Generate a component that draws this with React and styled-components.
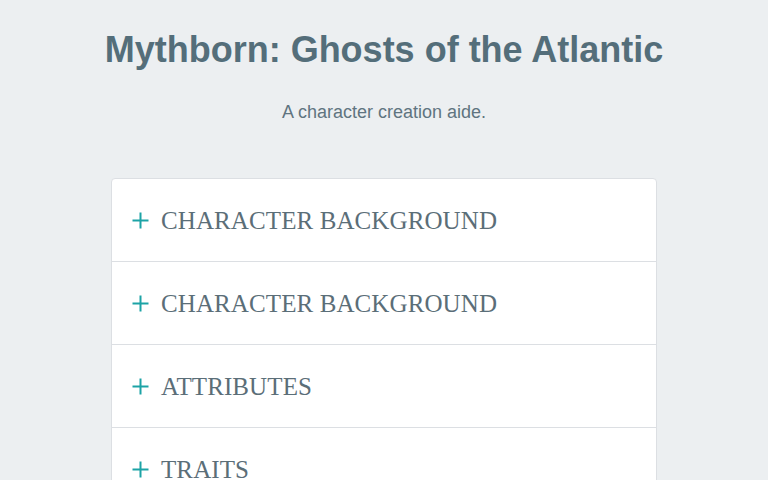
import React from "react";
import styled, { createGlobalStyle } from "styled-components";

const GlobalStyle = createGlobalStyle`
  html, body {
    margin: 0;
    padding: 0;
    background: #eceff1;
  }
  body {
    font-family: "Liberation Sans", Arial, sans-serif;
  }
`;

const sections = [
	"CHARACTER BACKGROUND",
	"CHARACTER BACKGROUND",
	"ATTRIBUTES",
	"TRAITS",
	"SKILLS",
];

const PlusIcon = () => (
	<svg width="17" height="17" viewBox="0 0 17 17" aria-hidden="true">
		<path d="M8.5 0.5v16M0.5 8.5h16" stroke="#1ca3a6" strokeWidth="2" fill="none" />
	</svg>
);

const App = () => {
	return (
		<>
			<GlobalStyle />
			<Page>
				<Title>Mythborn: Ghosts of the Atlantic</Title>
				<Subtitle>A character creation aide.</Subtitle>
				<Accordion>
					{sections.map((label, i) => (
						<Row key={i}>
							<IconWrap>
								<PlusIcon />
							</IconWrap>
							<RowLabel>{label}</RowLabel>
						</Row>
					))}
				</Accordion>
			</Page>
		</>
	);
};

const Page = styled.div`
	display: flex;
	flex-direction: column;
	align-items: center;
	padding-top: 29px;
`;

const Title = styled.h1`
	margin: 0;
	font-size: 36px;
	line-height: 42px;
	font-weight: 700;
	color: #546e7a;
	text-align: center;
`;

const Subtitle = styled.p`
	margin: 30px 0 0;
	font-size: 18px;
	line-height: 22px;
	color: #5f7480;
	text-align: center;
`;

const Accordion = styled.div`
	margin-top: 55px;
	width: 544px;
	background: #ffffff;
	border: 1px solid #dcdfe3;
	border-radius: 4px;
`;

const Row = styled.div`
	display: flex;
	align-items: center;
	height: 82px;
	padding: 0 20px;
	border-bottom: 1px solid #dcdfe3;
`;

const IconWrap = styled.span`
	display: flex;
	width: 17px;
	height: 17px;
	margin-right: 12px;
`;

const RowLabel = styled.span`
	padding-top: 2px;
	font-family: "Liberation Serif", "Times New Roman", serif;
	font-size: 25px;
	letter-spacing: 0.1px;
	color: #5b6e78;
`;

export default App;
